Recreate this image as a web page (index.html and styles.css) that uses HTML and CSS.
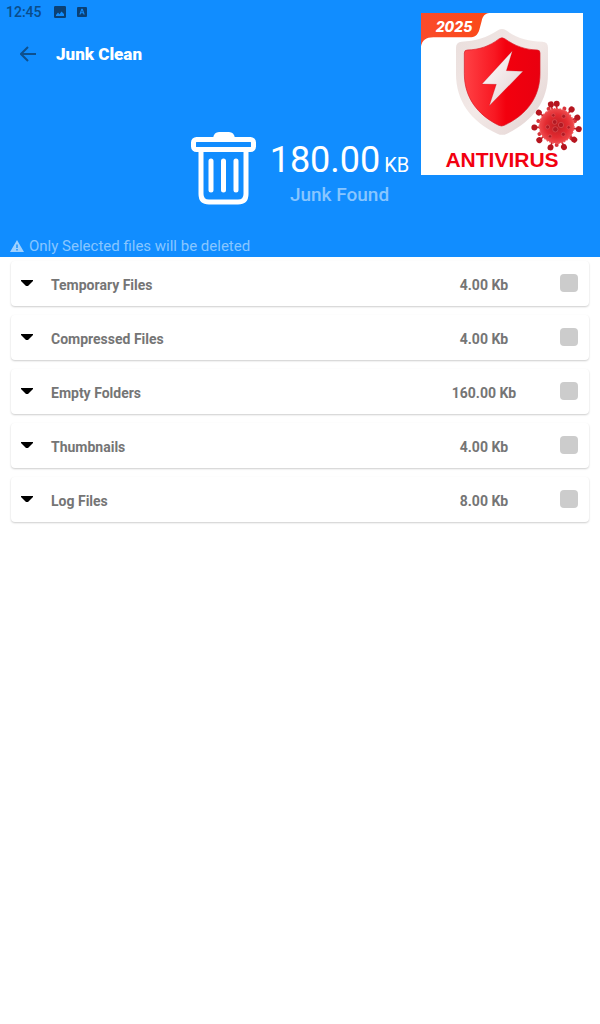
FILE: index.html
```html
<!DOCTYPE html>
<html lang="en">
<head>
<meta charset="utf-8">
<meta name="viewport" content="width=device-width, initial-scale=1">
<title>Junk Clean</title>
<link rel="stylesheet" href="styles.css">
</head>
<body>
<header class="hero">
  <div class="status">
    <span class="clock">12:45</span>
    <svg class="status-icon" viewBox="0 0 12 12" aria-hidden="true"><path fill-rule="evenodd" d="M1.200 0h9.600Q12 0 12 1.200v9.600Q12 12 10.800 12H1.200Q0 12 0 10.800V1.200Q0 0 1.200 0zM2 10h8V8L7.500 5.500 5.500 8.200 4 6.500 2 9z"/></svg>
    <svg class="status-icon small" viewBox="0 0 12 12" aria-hidden="true"><path fill-rule="evenodd" d="M1.200 0h9.600Q12 0 12 1.200v9.600Q12 12 10.800 12H1.200Q0 12 0 10.800V1.200Q0 0 1.200 0zM5.200 2L2.800 9h1.500l.5-1.500h2.500l.5 1.500h1.500L6.800 2zM6 3.800l.9 2.600H5.200z"/></svg>
  </div>
  <nav class="toolbar">
    <button class="back" type="button" aria-label="Back">
      <svg viewBox="0 0 16 16" aria-hidden="true"><path d="M16 8H1.500M8 1L1 8l7 7"/></svg>
    </button>
    <h1 class="title">Junk Clean</h1>
  </nav>
  <section class="summary">
    <svg class="bin" viewBox="0 0 65 73" aria-hidden="true">
      <path class="bin-fill" d="M22 6Q23 0 28 0h10q5 0 6 6z"/>
      <rect class="bin-line" x="2.500" y="7.500" width="60" height="10" rx="3"/>
      <path class="bin-line" d="M10 18v44q0 8 8 8h29q8 0 8-8V18M20 29v29M32.500 29v29M45 29v29"/>
    </svg>
    <div class="figures">
      <p class="amount">180.00<span class="unit">KB</span></p>
      <p class="caption">Junk Found</p>
    </div>
  </section>
  <p class="notice">
    <svg class="warning" viewBox="0 0 14 12" aria-hidden="true"><path fill-rule="evenodd" d="M7 0l7 12H0zM6.300 4.500h1.400v3.500H6.300zM6.300 9h1.400v1.400H6.300z"/></svg>
    Only Selected files will be deleted
  </p>
  <svg class="badge" viewBox="18 24 486 486" role="img" aria-label="Antivirus 2025">
    <defs>
      <linearGradient id="rim" x1="0" y1="0" x2="1" y2="1"><stop offset="0" stop-color="#e9dedc"/><stop offset=".5" stop-color="#f3e9e7"/><stop offset="1" stop-color="#e2d2d1"/></linearGradient>
      <linearGradient id="face" x1="0" y1="0" x2="1" y2="0"><stop offset="0" stop-color="#ff4145"/><stop offset=".4" stop-color="#f81822"/><stop offset=".55" stop-color="#f3000e"/><stop offset="1" stop-color="#e90010"/></linearGradient>
      <linearGradient id="bolt" x1="0" y1="0" x2="1" y2="1"><stop offset="0" stop-color="#fff"/><stop offset="1" stop-color="#e3cfcf"/></linearGradient>
      <linearGradient id="ribbon"><stop offset="0" stop-color="#fa4b2b"/><stop offset="1" stop-color="#fb4a17"/></linearGradient>
      <radialGradient id="virus"><stop offset="0" stop-color="#bd1c22"/><stop offset=".65" stop-color="#e32b31"/><stop offset="1" stop-color="#ee4a4d"/></radialGradient>
      <g id="spike"><path d="M0-40V-67" stroke="#c9252d" stroke-width="5"/><circle cy="-67" r="9" fill="#b5151f"/></g>
      <g id="stub"><path d="M0-38V-55" stroke="#e5444a" stroke-width="4"/><circle cy="-57" r="6" fill="#d9343b"/></g>
    </defs>
    <path fill="#fff" d="M18 24h486v486H18z"/>
    <path fill="url(#ribbon)" d="M18 24h205c-13 1-20 10-23 24l-7 26c-5 17-15 23-29 23H55c-22 0-33 9-37 27z"/>
    <text class="year" x="62" y="81">2025</text>
    <path fill="url(#rim)" d="M249 76q12-8 24 0c34 24 68 33 109 34q17 0 17 18v78c0 82-44 141-123 180q-14 7-29 0C167 349 123 287 123 206v-78q0-17 17-18c41-1 76-12 109-34z"/>
    <path fill="url(#face)" stroke="#d81a26" stroke-width="2" d="M253 101q8-5 16 0c32 23 63 33 98 34q8 0 8 9v62c0 71-40 123-107 155q-8 4-17 0C187 329 148 277 148 206v-62q0-9 9-9c36-1 66-11 96-34z"/>
    <path fill="url(#bolt)" stroke="#b3141e" stroke-opacity=".35" stroke-width="2" stroke-linejoin="round" d="M292 138L201 237l43 1-21 64 101-103-50-2z"/>
    <g transform="translate(425 363)">
      <use href="#stub" transform="rotate(24)"/><use href="#stub" transform="rotate(75)"/><use href="#stub" transform="rotate(130)"/><use href="#stub" transform="rotate(180)"/><use href="#stub" transform="rotate(245)"/><use href="#stub" transform="rotate(285)"/><use href="#stub" transform="rotate(335)"/>
      <use href="#spike"/><use href="#spike" transform="rotate(42)"/><use href="#spike" transform="rotate(68)"/><use href="#spike" transform="rotate(98)"/><use href="#spike" transform="rotate(128)"/><use href="#spike" transform="rotate(161)"/><use href="#spike" transform="rotate(196)"/><use href="#spike" transform="rotate(231)"/><use href="#spike" transform="rotate(266)"/><use href="#spike" transform="rotate(307)"/><use href="#spike" transform="rotate(345)"/>
      <circle r="52" fill="url(#virus)" stroke="#ee5759" stroke-width="4" stroke-dasharray="5 4"/>
      <g fill="#b01a24" stroke="#de5558" stroke-width="2"><circle cx="-6" cy="-12" r="7"/><circle cx="13" cy="-3" r="8"/><circle cx="-4" cy="10" r="8"/><circle cx="-27" cy="3" r="6"/><circle cx="-10" cy="-32" r="5"/><circle cx="21" cy="-29" r="6"/><circle cx="20" cy="25" r="6"/><circle cx="36" cy="4" r="5"/><circle cx="-20" cy="31" r="5"/></g>
    </g>
    <text class="brand" x="261" y="485">ANTIVIRUS</text>
  </svg>
</header>
<main class="list">
  <div class="card">
    <button class="expand" type="button" aria-label="Expand Temporary Files"><svg viewBox="0 0 12 6" aria-hidden="true"><path d="M0 0h12v1L7 6H5L0 1z"/></svg></button>
    <label class="name" for="temp">Temporary Files</label><span class="size">4.00 Kb</span><input class="check" id="temp" type="checkbox">
  </div>
  <div class="card">
    <button class="expand" type="button" aria-label="Expand Compressed Files"><svg viewBox="0 0 12 6" aria-hidden="true"><path d="M0 0h12v1L7 6H5L0 1z"/></svg></button>
    <label class="name" for="compressed">Compressed Files</label><span class="size">4.00 Kb</span><input class="check" id="compressed" type="checkbox">
  </div>
  <div class="card">
    <button class="expand" type="button" aria-label="Expand Empty Folders"><svg viewBox="0 0 12 6" aria-hidden="true"><path d="M0 0h12v1L7 6H5L0 1z"/></svg></button>
    <label class="name" for="empty">Empty Folders</label><span class="size">160.00 Kb</span><input class="check" id="empty" type="checkbox">
  </div>
  <div class="card">
    <button class="expand" type="button" aria-label="Expand Thumbnails"><svg viewBox="0 0 12 6" aria-hidden="true"><path d="M0 0h12v1L7 6H5L0 1z"/></svg></button>
    <label class="name" for="thumbs">Thumbnails</label><span class="size">4.00 Kb</span><input class="check" id="thumbs" type="checkbox">
  </div>
  <div class="card">
    <button class="expand" type="button" aria-label="Expand Log Files"><svg viewBox="0 0 12 6" aria-hidden="true"><path d="M0 0h12v1L7 6H5L0 1z"/></svg></button>
    <label class="name" for="logs">Log Files</label><span class="size">8.00 Kb</span><input class="check" id="logs" type="checkbox">
  </div>
</main>
</body>
</html>
```
FILE: styles.css
```css
* { box-sizing: border-box; }
body { margin: 0; background: #fff; font-family: Roboto, "Liberation Sans", sans-serif; }
h1, p { margin: 0; }
svg { display: block; flex: none; }
button { border: 0; padding: 0; background: none; }

.hero { position: relative; background: #118dff; color: #fff; }
.status { display: flex; align-items: center; height: 24px; padding: 0 6px; color: #0a4c8a; }
.clock { width: 48px; font-size: 14px; font-weight: 500; line-height: 24px; }
.status-icon { width: 12px; height: 12px; fill: #0b4074; }
.status-icon.small { width: 10px; height: 10px; margin-left: 11px; }
.toolbar { display: flex; align-items: center; gap: 20px; height: 60px; padding: 0 20px; }
.back svg { width: 16px; height: 16px; fill: none; stroke: #0e508e; stroke-width: 2; }
.title { font-size: 17px; font-weight: 900; line-height: 24px; }

.summary { display: flex; justify-content: center; align-items: center; gap: 14px; height: 152px; padding-top: 16px; }
.bin { width: 65px; height: 73px; }
.bin-fill { fill: #fff; }
.bin-line { fill: none; stroke: #fff; stroke-width: 5; stroke-linecap: round; stroke-linejoin: round; }
.figures { padding-top: 12px; text-align: center; }
.amount { font-size: 36px; line-height: 36px; }
.unit { margin-left: 4px; font-size: 20px; }
.caption { color: #88c6ff; font-size: 19px; font-weight: 500; line-height: 24px; }
.notice { display: flex; align-items: center; gap: 5px; height: 21px; padding: 0 10px 2px; color: #88c6ff; font-size: 15px; }
.warning { width: 14px; height: 12px; fill: #a0d1ff; }

.badge { position: absolute; top: 13px; right: 17px; width: 162px; height: 162px; }
.year { fill: #fff; font: italic 800 42px Inter, sans-serif; }
.brand { fill: #f20010; font: 700 63px "Liberation Sans", sans-serif; text-anchor: middle; }

.list { display: grid; gap: 9px; padding: 4px 11px; }
.card { display: grid; grid-template-columns: 30px 1fr 110px 39px; align-items: center; height: 45px; padding: 3px 11px 0 10px; border-radius: 4px; background: #fff; box-shadow: 0 1px 2px rgba(0, 0, 0, .2); }
.expand { justify-self: start; padding-bottom: 4px; }
.expand svg { width: 12px; height: 6px; }
.name, .size { color: #757575; font-size: 14px; font-weight: 700; line-height: 20px; }
.name { padding-left: 10px; margin-left: -10px; }
.size { text-align: center; }
.check { appearance: none; justify-self: end; width: 18px; height: 18px; margin: 0 0 4px; border-radius: 4px; background: #ccc; }
.check:checked { background: #118dff; }
```
